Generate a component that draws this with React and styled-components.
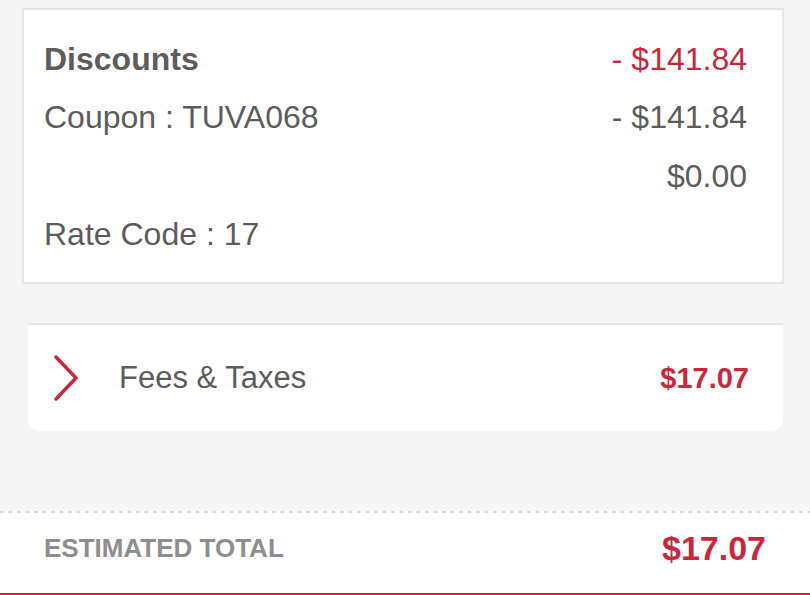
import React from 'react';
import styled, { createGlobalStyle } from 'styled-components';

const GlobalStyle = createGlobalStyle`
  html, body {
    margin: 0;
    padding: 0;
    background-color: #f5f5f5;
  }

  body {
    font-family: 'Liberation Sans', Arial, sans-serif;
    color: #5e5c5a;
  }
`;

const Page = styled.div`
  display: flex;
  flex-direction: column;
  height: 595px;
  overflow: hidden;
`;

const DiscountCard = styled.section`
  background-color: #fff;
  border: 2px solid #e6e6e3;
  margin: 8px 26px 0 22px;
  padding: 20px 35px 18px 20px;
`;

const Row = styled.div`
  display: flex;
  justify-content: space-between;
  align-items: center;
  height: 58.5px;
  font-size: 32px;
  font-weight: ${({ $bold }) => ($bold ? 700 : 400)};
  color: #5e5c5a;
`;

const Amount = styled.span`
  margin-left: auto;
  color: ${({ $accent }) => ($accent ? '#c8283a' : '#5e5c5a')};
  font-weight: 400;
`;

const FeesCard = styled.section`
  display: flex;
  align-items: center;
  height: 106px;
  margin: 39px 27px 0 28px;
  padding: 0 34px 0 25px;
  background-color: #fff;
  border-top: 2px solid #e5e5e3;
  border-radius: 0 0 12px 12px;
`;

const Chevron = styled.svg`
  width: 26px;
  height: 48px;
  flex-shrink: 0;
  margin-right: 40px;
`;

const FeesLabel = styled.span`
  font-size: 31px;
  color: #5e5c5a;
`;

const FeesAmount = styled.span`
  margin-left: auto;
  font-size: 29px;
  font-weight: 700;
  color: #c8283a;
`;

const Spacer = styled.div`
  flex: 1;
`;

const Footer = styled.footer`
  display: flex;
  align-items: center;
  justify-content: space-between;
  flex-shrink: 0;
  height: 84px;
  padding: 0 44px 8px 44px;
  box-sizing: border-box;
  background-color: #fff;
  background-image: linear-gradient(to right, #d8d8d5 45%, transparent 0);
  background-size: 8.5px 2px;
  background-repeat: repeat-x;
  background-position: top left;
  border-bottom: 2px solid #c8283a;
`;

const TotalLabel = styled.span`
  font-size: 26px;
  font-weight: 700;
  color: #8e8e8e;
`;

const TotalAmount = styled.span`
  font-size: 34px;
  font-weight: 700;
  color: #c8283a;
`;

const App = () => (
  <>
    <GlobalStyle />
    <Page>
      <DiscountCard>
        <Row $bold>
          <span>Discounts</span>
          <Amount $accent>- $141.84</Amount>
        </Row>
        <Row>
          <span>Coupon : TUVA068</span>
          <Amount>- $141.84</Amount>
        </Row>
        <Row>
          <Amount>$0.00</Amount>
        </Row>
        <Row>
          <span>Rate Code : 17</span>
        </Row>
      </DiscountCard>

      <FeesCard>
        <Chevron viewBox="0 0 26 48">
          <polyline
            points="3,3 23,24 3,45"
            fill="none"
            stroke="#c8283a"
            strokeWidth="3.5"
            strokeLinecap="round"
            strokeLinejoin="miter"
          />
        </Chevron>
        <FeesLabel>Fees &amp; Taxes</FeesLabel>
        <FeesAmount>$17.07</FeesAmount>
      </FeesCard>

      <Spacer />

      <Footer>
        <TotalLabel>ESTIMATED TOTAL</TotalLabel>
        <TotalAmount>$17.07</TotalAmount>
      </Footer>
    </Page>
  </>
);

export default App;
